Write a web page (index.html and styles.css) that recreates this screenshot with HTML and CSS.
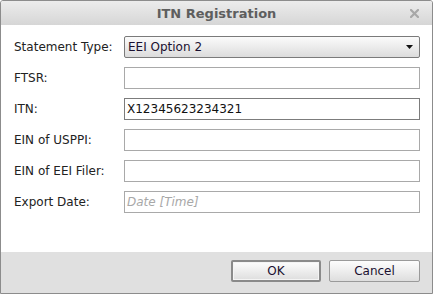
FILE: index.html
```html
<!DOCTYPE html>
<html>
<head>
<meta charset="utf-8">
<link rel="stylesheet" href="styles.css">
</head>
<body>
<div class="dialog">
  <div class="titlebar">
    <span class="title">ITN Registration</span>
    <span class="close"><svg width="9" height="9" viewBox="0 0 9 9"><path d="M1 1L8 8M8 1L1 8" stroke="#a8a8a8" stroke-width="2.2" stroke-linecap="square"/></svg></span>
  </div>
  <div class="content">
    <div class="form">
      <label class="lbl">Statement Type:</label>
      <div class="select"><span>EEI Option 2</span><svg class="arrow" width="7" height="4" viewBox="0 0 7 4"><path d="M0 0H7L3.5 4Z" fill="#111"/></svg></div>
      <label class="lbl">FTSR:</label>
      <div class="input"></div>
      <label class="lbl">ITN:</label>
      <div class="input dark">X12345623234321</div>
      <label class="lbl">EIN of USPPI:</label>
      <div class="input"></div>
      <label class="lbl">EIN of EEI Filer:</label>
      <div class="input"></div>
      <label class="lbl">Export Date:</label>
      <div class="input placeholder">Date [Time]</div>
    </div>
  </div>
  <div class="footer">
    <button class="btn default">OK</button>
    <button class="btn">Cancel</button>
  </div>
</div>
</body>
</html>
```

FILE: styles.css
```css
* { box-sizing: border-box; }
html, body { margin: 0; padding: 0; background: #ffffff; }
body { font-family: "DejaVu Sans", Verdana, sans-serif; font-size: 12px; color: #222; }

.dialog {
  width: 433px;
  height: 294px;
  border: 1px solid #8c8c8c;
  border-radius: 3px 3px 0 0;
  display: flex;
  flex-direction: column;
  background: #fff;
  overflow: hidden;
}

.titlebar {
  height: 24px;
  flex: none;
  background: linear-gradient(#ececec, #d6d6d6);
  display: flex;
  align-items: center;
  justify-content: center;
  position: relative;
}
.title {
  font-weight: bold;
  font-size: 13px;
  color: #5e5e5e;
  padding-top: 1px;
}
.close {
  position: absolute;
  right: 13px;
  top: 8px;
  display: flex;
}

.content {
  flex: 1;
  padding: 11px 12px 0 13px;
}
.form {
  display: grid;
  grid-template-columns: 110px 1fr;
  row-gap: 9px;
  align-items: center;
}
.lbl { color: #222; }

.select {
  height: 22px;
  border: 1px solid #7a7a7a;
  border-radius: 2px;
  background: linear-gradient(#fbfbfb, #dcdcdc);
  display: flex;
  align-items: center;
  justify-content: space-between;
  padding: 0 6px 0 3px;
  color: #1a1030;
}
.arrow { display: block; }

.input {
  height: 22px;
  border: 1px solid #a9a9a9;
  background: #fff;
  display: flex;
  align-items: center;
  padding: 0 2px;
  color: #111;
}
.input.dark { border-color: #7c7c7c; }
.input.placeholder { color: #a8a8a8; font-style: italic; }

.footer {
  height: 41px;
  flex: none;
  background: #e0e0e0;
  display: flex;
  justify-content: flex-end;
  gap: 8px;
  padding: 8px 12px 0 0;
}
.btn {
  width: 90px;
  height: 22px;
  font-family: "DejaVu Sans", Verdana, sans-serif;
  font-size: 12px;
  color: #1a1030;
  border: 1px solid #9a9a9a;
  border-radius: 2px;
  background: linear-gradient(#fdfdfd, #dedede);
  padding: 0;
  margin: 0;
}
.btn + .btn { width: 91px; }
.btn.default {
  border: 2px solid #8a8a8a;
  box-shadow: inset 0 0 0 1px #f4f4f4;
}
```
